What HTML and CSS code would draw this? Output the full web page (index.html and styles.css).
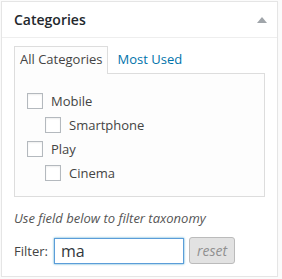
FILE: index.html
```html
<!DOCTYPE html>
<html lang="en">

<head>
    <meta charset="UTF-8" />
    <meta name="viewport" content="width=device-width, initial-scale=1.0" />
    <title>Categories</title>
    <link rel="stylesheet" href="styles.css">
</head>

<body>
    <div class="postbox">
        <div class="postbox-header">
            <h2 class="title">Categories</h2>
            <span class="toggle"></span>
        </div>

        <div class="inside">
            <ul class="category-tabs">
                <li class="tab active">All Categories</li>
                <li class="tab"><a href="#">Most Used</a></li>
            </ul>

            <div class="panel">
                <ul class="checklist">
                    <li class="item"><span class="box"></span>Mobile</li>
                    <li class="item child"><span class="box"></span>Smartphone</li>
                    <li class="item"><span class="box"></span>Play</li>
                    <li class="item child"><span class="box"></span>Cinema</li>
                </ul>
            </div>

            <p class="hint">Use field below to filter taxonomy</p>

            <div class="filter">
                <label class="filter-label">Filter:</label>
                <input class="filter-input" type="text" value="ma">
                <button class="reset">reset</button>
            </div>
        </div>
    </div>
</body>

</html>
```

FILE: styles.css
```css
body {
    margin: 0;
    background-color: #fbfbfb;
    color: #444;
    font-family: "Open Sans", sans-serif;
    font-size: 13px;
}

.postbox {
    margin: 1px 0 0 1px;
    width: 275px;
    height: 274px;
    background: #fff;
    border: 1px solid #e5e5e5;
    box-shadow: 0 1px 1px rgba(0, 0, 0, 0.04);
}

.postbox-header {
    display: flex;
    justify-content: space-between;
    align-items: center;
    border-bottom: 1px solid #eee;
}

.title {
    margin: 0;
    padding: 8px 12px;
    font-size: 14px;
    font-weight: 600;
    line-height: 19px;
    color: #23282d;
}

.toggle {
    width: 0;
    height: 0;
    margin-right: 10px;
    border-left: 5px solid transparent;
    border-right: 5px solid transparent;
    border-bottom: 6px solid #a0a5aa;
}

.inside {
    padding: 8px 12px 0 12px;
}

.category-tabs {
    display: flex;
    gap: 3px;
    margin: 0;
    padding: 0;
    list-style: none;
}

.tab {
    padding: 5px 5px 6px 5px;
    line-height: 15px;
    border: 1px solid transparent;
    border-bottom: none;
}

.tab a {
    color: #0073aa;
    text-decoration: none;
}

.tab.active {
    background: #fdfdfd;
    border-color: #ddd;
    margin-bottom: -1px;
    padding-bottom: 7px;
    position: relative;
}

.panel {
    height: 122px;
    padding: 0 12px;
    background: #fdfdfd;
    border: 1px solid #ddd;
}

.checklist {
    margin: 0;
    padding: 15px 0 0 0;
    list-style: none;
}

.item {
    display: flex;
    align-items: center;
    height: 24px;
}

.item.child {
    padding-left: 18px;
}

.box {
    width: 14px;
    height: 14px;
    margin-right: 8px;
    background: #fff;
    border: 1px solid #b4b9be;
    box-shadow: inset 0 1px 2px rgba(0, 0, 0, 0.07);
}

.hint {
    margin: 12px 0 0 0;
    font-style: italic;
    color: #555;
    line-height: 18px;
}

.filter {
    display: flex;
    align-items: center;
    margin-top: 10px;
}

.filter-label {
    margin-right: 6px;
}

.filter-input {
    width: 116px;
    height: 24px;
    margin: 0;
    padding: 0 6px;
    border: 1px solid #5b9dd9;
    box-shadow: 0 0 2px rgba(30, 140, 190, 0.8);
    font-family: "Open Sans", sans-serif;
    font-size: 16px;
    color: #32373c;
    outline: none;
}

.reset {
    margin-left: 5px;
    height: 27px;
    padding: 0 7px;
    background: #e2e2e2;
    border: 1px solid #bbb;
    border-radius: 3px;
    font-family: "Open Sans", sans-serif;
    font-size: 14px;
    font-style: italic;
    color: #909090;
}
```
